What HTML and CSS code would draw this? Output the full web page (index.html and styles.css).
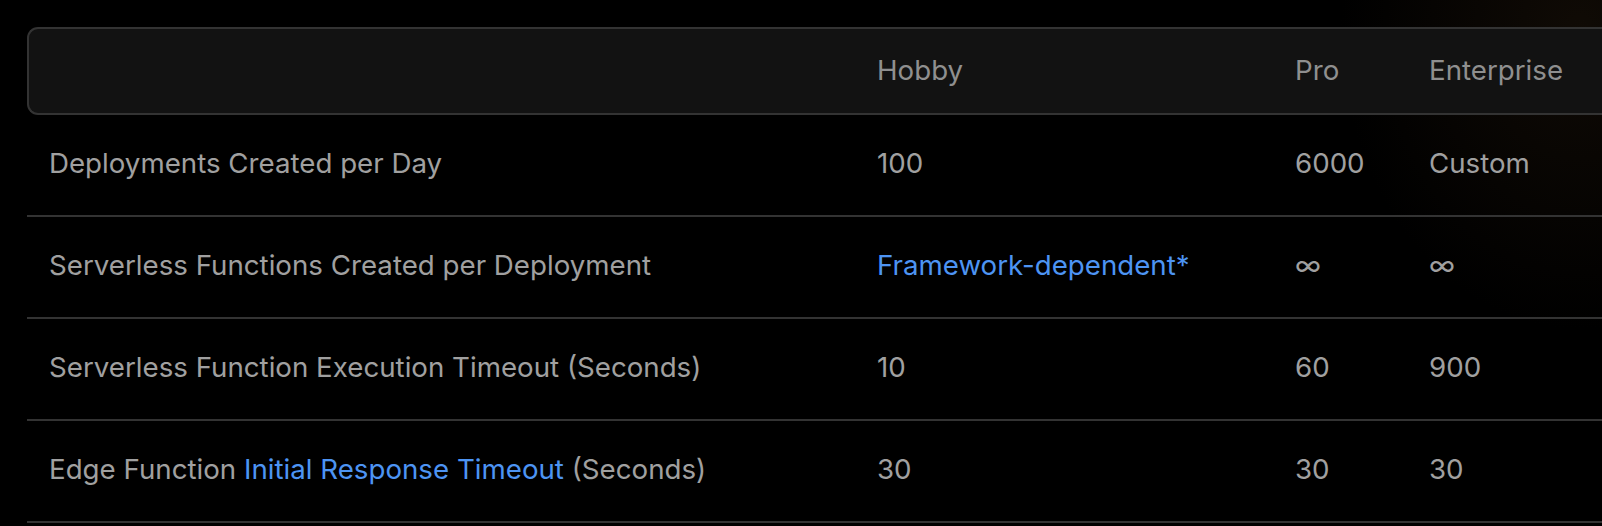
FILE: index.html
```html
<!DOCTYPE html>
<html lang="en">
<head>
<meta charset="utf-8">
<title>Limits</title>
<link rel="stylesheet" href="styles.css">
</head>
<body>
<div class="page">
  <div class="table">
    <div class="head">
      <div class="cell"></div>
      <div class="cell">Hobby</div>
      <div class="cell">Pro</div>
      <div class="cell">Enterprise</div>
    </div>
    <div class="row">
      <div class="cell">Deployments Created per Day</div>
      <div class="cell">100</div>
      <div class="cell">6000</div>
      <div class="cell">Custom</div>
    </div>
    <div class="row">
      <div class="cell">Serverless Functions Created per Deployment</div>
      <div class="cell"><a class="link" href="#">Framework-dependent*</a></div>
      <div class="cell">∞</div>
      <div class="cell">∞</div>
    </div>
    <div class="row">
      <div class="cell">Serverless Function Execution Timeout (Seconds)</div>
      <div class="cell">10</div>
      <div class="cell">60</div>
      <div class="cell">900</div>
    </div>
    <div class="row">
      <div class="cell">Edge Function <a class="link" href="#">Initial Response Timeout</a> (Seconds)</div>
      <div class="cell">30</div>
      <div class="cell">30</div>
      <div class="cell">30</div>
    </div>
  </div>
</div>
</body>
</html>
```
FILE: styles.css
```css
html, body {
  margin: 0;
  padding: 0;
  background: #000;
  overflow: hidden;
}
body {
  width: 1602px;
  height: 526px;
  font-family: Inter, "Noto Sans", sans-serif;
  font-size: 27.7px;
  color: #a0a0a0;
  background:
    radial-gradient(ellipse 240px 300px at 1580px 30px, rgba(45, 30, 15, 0.35), rgba(0,0,0,0) 100%),
    #000;
}
.page {
  padding: 27px 0 0 27px;
  box-sizing: border-box;
  width: 1602px;
}
.table {
  width: 100%;
}
.head,
.row {
  display: grid;
  grid-template-columns: 828px 418px 134px 1fr;
  align-items: center;
  box-sizing: border-box;
}
.head {
  height: 88px;
  padding-left: 20px;
  padding-bottom: 2px;
  background: #121212;
  border: 2px solid #333;
  border-right: 0;
  border-radius: 11px 0 0 11px;
  color: #8f8f8f;
}
.head .cell:first-child {
  width: 826px;
}
.row {
  height: 102px;
  padding-left: 22px;
  padding-bottom: 4px;
  border-bottom: 2px solid #333;
}
.cell {
  white-space: nowrap;
}
.link {
  color: #4d94f3;
  text-decoration: none;
}
```
